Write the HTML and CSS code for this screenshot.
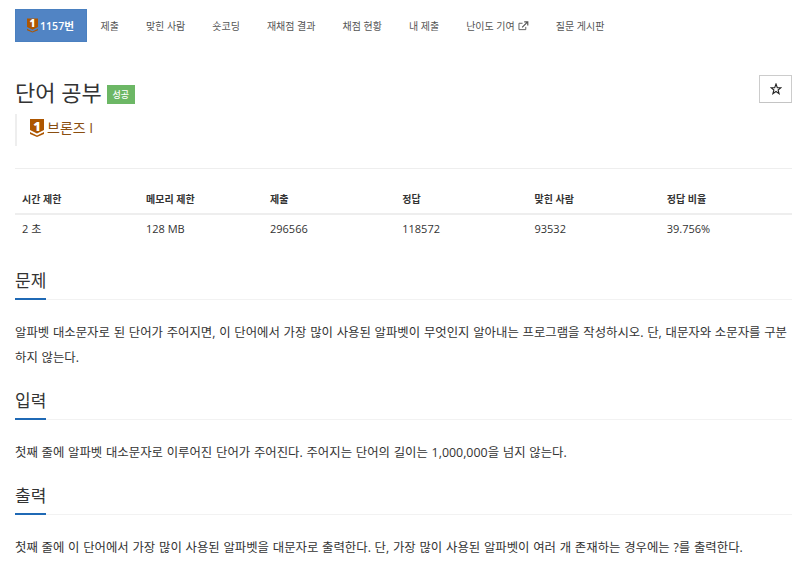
FILE: index.html
```html
<!DOCTYPE html>
<html lang="ko">
<head>
<meta charset="utf-8">
<title>단어 공부</title>
<link rel="stylesheet" href="styles.css">
</head>
<body>
<svg class="defs" width="0" height="0" aria-hidden="true">
  <symbol id="tier" viewBox="0 0 14 18">
    <path d="M0 0H14V11L7 14.5L0 11Z" fill="#ad5600"/>
    <path d="M0 13L7 16.5L14 13V15L7 18L0 15Z" fill="#ad5600"/>
  </symbol>
</svg>
<nav class="tabs">
  <a class="tab active"><span class="tier tier-small"><svg><use href="#tier"/></svg><b>1</b></span>1157번</a>
  <a class="tab">제출</a>
  <a class="tab">맞힌 사람</a>
  <a class="tab">숏코딩</a>
  <a class="tab">재채점 결과</a>
  <a class="tab">채점 현황</a>
  <a class="tab">내 제출</a>
  <a class="tab">난이도 기여 <svg class="ext" viewBox="0 0 12 11"><path d="M8.5 6.5V9.5H1V2.5H5" fill="none" stroke="#555" stroke-width="1"/><path d="M4.5 7L10 1.5M6.8 1H10.7V5" fill="none" stroke="#555" stroke-width="1.3"/></svg></a>
  <a class="tab">질문 게시판</a>
</nav>
<header class="title-row">
  <div class="title-main">
    <h1>단어 공부</h1>
    <span class="label">성공</span>
  </div>
  <button class="star" aria-label="즐겨찾기"><svg viewBox="0 0 12 12"><path d="M6 1L7.3 4.6L11 4.7L8.1 7L9.1 10.6L6 8.5L2.9 10.6L3.9 7L1 4.7L4.7 4.6Z" fill="none" stroke="#222" stroke-width="1.1"/></svg></button>
</header>
<blockquote class="rank">
  <span class="tier tier-large"><svg><use href="#tier"/></svg><b>1</b></span>브론즈 I
</blockquote>
<hr class="rule">
<table class="info">
  <colgroup><col class="narrow"><col class="narrow"><col><col><col><col></colgroup>
  <thead>
    <tr><th>시간 제한</th><th>메모리 제한</th><th>제출</th><th>정답</th><th>맞힌 사람</th><th>정답 비율</th></tr>
  </thead>
  <tbody>
    <tr><td>2 초</td><td>128 MB</td><td>296566</td><td>118572</td><td>93532</td><td>39.756%</td></tr>
  </tbody>
</table>
<section class="block first">
  <div class="headline"><h2>문제</h2></div>
  <p>알파벳 대소문자로 된 단어가 주어지면, 이 단어에서 가장 많이 사용된 알파벳이 무엇인지 알아내는 프로그램을 작성하시오. 단, 대문자와 소문자를 구분하지 않는다.</p>
</section>
<section class="block">
  <div class="headline"><h2>입력</h2></div>
  <p>첫째 줄에 알파벳 대소문자로 이루어진 단어가 주어진다. 주어지는 단어의 길이는 1,000,000을 넘지 않는다.</p>
</section>
<section class="block">
  <div class="headline"><h2>출력</h2></div>
  <p>첫째 줄에 이 단어에서 가장 많이 사용된 알파벳을 대문자로 출력한다. 단, 가장 많이 사용된 알파벳이 여러 개 존재하는 경우에는 ?를 출력한다.</p>
</section>
</body>
</html>
```

FILE: styles.css
```css
* { box-sizing: border-box; }
html, body { height: 566px; overflow: hidden; }
body {
  margin: 0;
  padding: 9px 8px 0 15px;
  background: #fff;
  color: #333;
  font-family: "Open Sans", "Noto Sans CJK KR", sans-serif;
  font-size: 13px;
  line-height: 20px;
}
.defs { position: absolute; }
.tabs { display: flex; height: 33px; font-size: 10px; color: #555; }
.tab {
  display: flex;
  align-items: center;
  padding: 0 13.5px;
  white-space: nowrap;
}
.tab.active {
  flex: none;
  justify-content: flex-start;
  padding: 0 0 0 11px;
  background: #5184c4;
  border: 1px solid #4a80c0;
  color: #fff;
  font-size: 10.6px;
  font-weight: 600;
  width: 72px;
}
.ext { width: 11px; height: 10px; margin-left: 3px; }
.tier { position: relative; display: inline-block; flex: none; }
.tier svg { display: block; width: 100%; height: 100%; }
.tier b {
  position: absolute;
  left: 0;
  right: 0;
  text-align: center;
  color: #fff;
  font-weight: 800;
}
.tier-small { width: 11px; height: 15px; margin-right: 2px; }
.tier-small b { top: -1px; font-size: 10px; line-height: 13px; }
.tier-large { width: 14px; height: 18px; margin-right: 3px; }
.tier-large b { top: 0; font-size: 13px; line-height: 14px; }
.title-row {
  display: flex;
  justify-content: space-between;
  align-items: flex-start;
  margin-top: 33px;
  height: 36px;
}
.title-main { display: flex; align-items: flex-start; }
h1 {
  margin: 0;
  font-size: 22px;
  font-weight: 400;
  line-height: 34px;
  color: #333;
}
.label {
  margin: 10px 0 0 5px;
  width: 28px;
  height: 19px;
  background: #6cb765;
  color: #fff;
  font-size: 9px;
  font-weight: 500;
  line-height: 19px;
  text-align: center;
}
.star {
  display: flex;
  align-items: center;
  justify-content: center;
  width: 33px;
  height: 28px;
  padding: 0;
  background: #fff;
  border: 1px solid #ccc;
  border-bottom-color: #c4c4c4;
}
.star svg { width: 12px; height: 12px; }
.rank {
  display: flex;
  align-items: center;
  margin: 3px 0 0;
  padding: 0 0 4px 13px;
  height: 32px;
  border-left: 2px solid #eee;
  color: #8a4e10;
  font-size: 14px;
}
.rule { margin: 22px 0 0; border: 0; border-top: 1px solid #eee; }
.info {
  width: 100%;
  margin-top: 15px;
  border-collapse: collapse;
  table-layout: fixed;
  font-size: 10px;
}
.narrow { width: 124px; }
.info th, .info td { padding: 0 7px; text-align: left; }
.info th { height: 30px; font-weight: 700; border-bottom: 2px solid #eee; color: #333; }
.info td { height: 29px; font-size: 11px; }
.block p {
  margin: 0;
  line-height: 25px;
  font-size: 12.4px;
  word-spacing: 0.5px;
  color: #333;
}
.block { margin-top: 18px; }
.block.first { margin-top: 25px; }
.headline { height: 32px; border-bottom: 1px solid #f2f2f2; margin-bottom: 20px; }
h2 {
  display: inline-block;
  height: 32px;
  margin: 0;
  padding: 0;
  border-bottom: 2px solid #1f69b5;
  font-size: 17px;
  font-weight: 400;
  line-height: 26px;
  color: #333;
}
```
